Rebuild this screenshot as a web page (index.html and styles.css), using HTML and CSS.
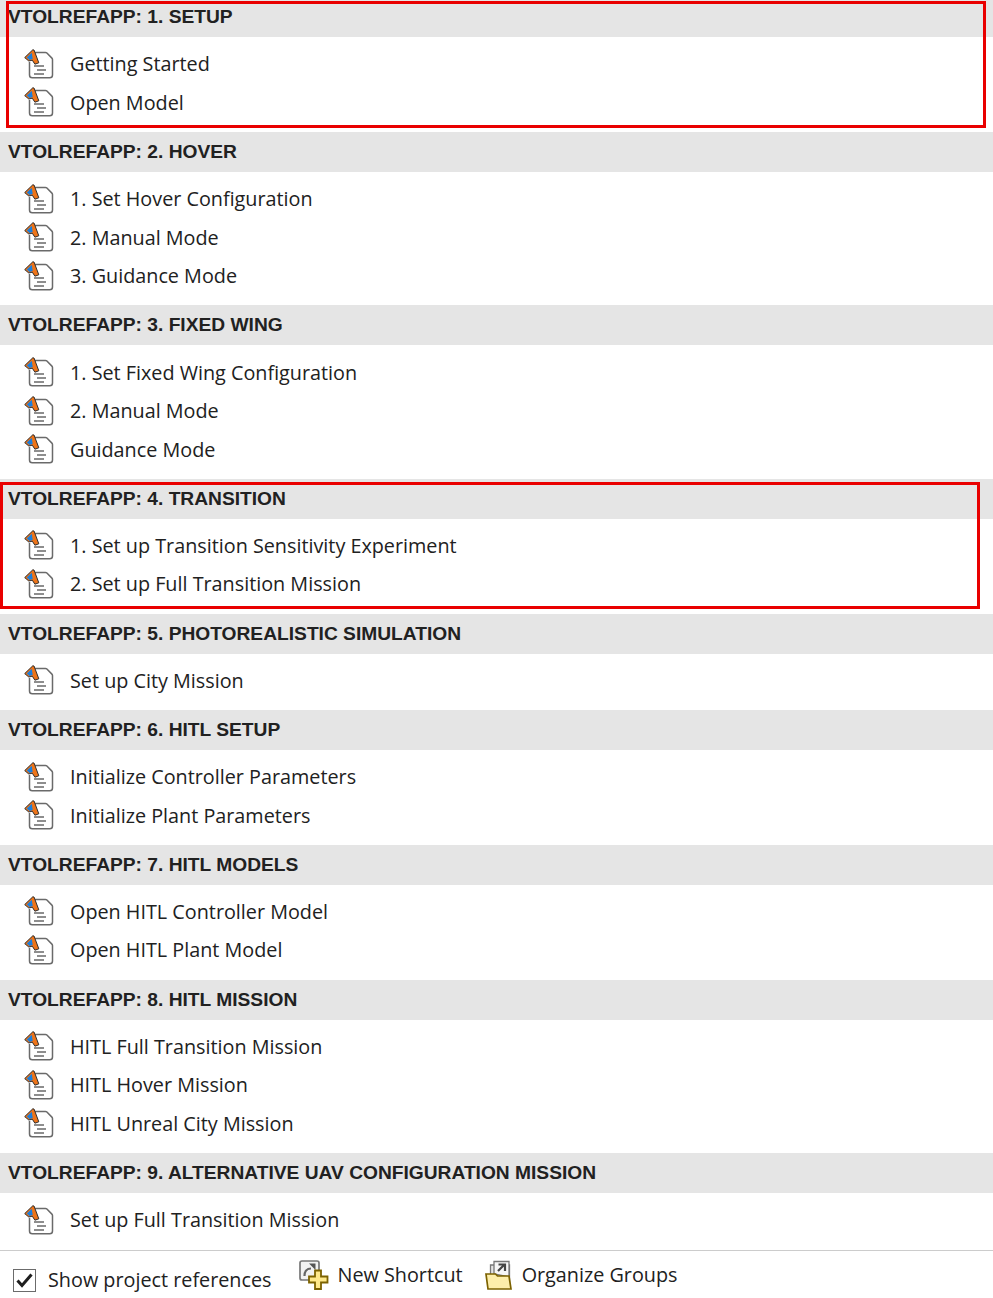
FILE: index.html
```html
<!DOCTYPE html>
<html lang="en">
<head>
<meta charset="UTF-8">
<title>Project Shortcuts</title>
<link rel="stylesheet" href="styles.css">
</head>
<body>

<svg class="defs" width="0" height="0">
  <symbol id="script" viewBox="0 0 30 30">
    <path d="M11 3.500h10.500a2 2 0 0 1 1.400.6l5 5a2 2 0 0 1 .6 1.400V26a2.800 2.800 0 0 1-2.800 2.800H8.300A2.800 2.800 0 0 1 5.500 26V13" fill="#fff" stroke="#6a6a6a" stroke-width="1.500"/>
    <path d="M10 17h10M13 21h9M10 25h10" fill="none" stroke="#6a6a6a" stroke-width="1.300"/>
    <path d="M.7 8.600 8.800.8l1.200.2 4.800 12.800-3.900 1.400-2.600-4-3.500.8z" fill="#ee7418" stroke="#2f2f2f" stroke-width="1"/>
    <path d="M2.800 8.500 7.800 3.800l.9 6.200-3.200 1z" fill="#1c7fdc"/>
  </symbol>
</svg>

<div class="list">
  <section class="group">
    <h2>VTOLREFAPP: 1. SETUP</h2>
    <ul>
      <li><svg class="ico"><use href="#script"/></svg>Getting Started</li>
      <li><svg class="ico"><use href="#script"/></svg>Open Model</li>
    </ul>
  </section>
  <section class="group">
    <h2>VTOLREFAPP: 2. HOVER</h2>
    <ul>
      <li><svg class="ico"><use href="#script"/></svg>1. Set Hover Configuration</li>
      <li><svg class="ico"><use href="#script"/></svg>2. Manual Mode</li>
      <li><svg class="ico"><use href="#script"/></svg>3. Guidance Mode</li>
    </ul>
  </section>
  <section class="group">
    <h2>VTOLREFAPP: 3. FIXED WING</h2>
    <ul>
      <li><svg class="ico"><use href="#script"/></svg>1. Set Fixed Wing Configuration</li>
      <li><svg class="ico"><use href="#script"/></svg>2. Manual Mode</li>
      <li><svg class="ico"><use href="#script"/></svg>Guidance Mode</li>
    </ul>
  </section>
  <section class="group">
    <h2>VTOLREFAPP: 4. TRANSITION</h2>
    <ul>
      <li><svg class="ico"><use href="#script"/></svg>1. Set up Transition Sensitivity Experiment</li>
      <li><svg class="ico"><use href="#script"/></svg>2. Set up Full Transition Mission</li>
    </ul>
  </section>
  <section class="group">
    <h2>VTOLREFAPP: 5. PHOTOREALISTIC SIMULATION</h2>
    <ul>
      <li><svg class="ico"><use href="#script"/></svg>Set up City Mission</li>
    </ul>
  </section>
  <section class="group">
    <h2>VTOLREFAPP: 6. HITL SETUP</h2>
    <ul>
      <li><svg class="ico"><use href="#script"/></svg>Initialize Controller Parameters</li>
      <li><svg class="ico"><use href="#script"/></svg>Initialize Plant Parameters</li>
    </ul>
  </section>
  <section class="group">
    <h2>VTOLREFAPP: 7. HITL MODELS</h2>
    <ul>
      <li><svg class="ico"><use href="#script"/></svg>Open HITL Controller Model</li>
      <li><svg class="ico"><use href="#script"/></svg>Open HITL Plant Model</li>
    </ul>
  </section>
  <section class="group">
    <h2>VTOLREFAPP: 8. HITL MISSION</h2>
    <ul>
      <li><svg class="ico"><use href="#script"/></svg>HITL Full Transition Mission</li>
      <li><svg class="ico"><use href="#script"/></svg>HITL Hover Mission</li>
      <li><svg class="ico"><use href="#script"/></svg>HITL Unreal City Mission</li>
    </ul>
  </section>
  <section class="group">
    <h2>VTOLREFAPP: 9. ALTERNATIVE UAV CONFIGURATION MISSION</h2>
    <ul>
      <li><svg class="ico"><use href="#script"/></svg>Set up Full Transition Mission</li>
    </ul>
  </section>
</div>

<div class="footer">
  <label class="check">
    <svg class="box" viewBox="0 0 23 23">
      <rect x="0.5" y="0.5" width="22" height="22" fill="#fff" stroke="#6b6b6b"/>
      <path d="M4.500 11.500 9 16.500 18.500 5.500" fill="none" stroke="#1e1e1e" stroke-width="3"/>
    </svg>
    <span class="check-text">Show project references</span>
  </label>
  <a class="action">
    <svg class="ico" viewBox="0 0 30 30">
      <rect x="1" y="1" width="19" height="19" rx="2" fill="#f2f2f2" stroke="#777" stroke-width="1.700"/>
      <path d="M5.500 16c0-5 2.500-7.500 6.500-7.500" fill="none" stroke="#666" stroke-width="2.200"/>
      <path d="M10 3.500h6.500V10z" fill="#555"/>
      <path d="M16 10.500h6v6h6.500v6H22V29h-6v-6.500H10v-6h6z" fill="#ffe98a" stroke="#7c6200" stroke-width="1.800"/>
    </svg>
    New Shortcut
  </a>
  <a class="action action-groups">
    <svg class="ico" viewBox="0 0 27 30">
      <path d="M5.500 14V5h19v21H5.500z" fill="#e4e4e4" stroke="#777" stroke-width="1.300"/>
      <path d="M9 14V1.500h15V17z" fill="#f6f6f6" stroke="#777" stroke-width="1.300"/>
      <path d="M13 11l6-6M13.500 4.500H20V11" fill="none" stroke="#444" stroke-width="2.200"/>
      <path d="M1 14h9.500l2 2H24l2 13H3z" fill="#fdeeaa" stroke="#7c6200" stroke-width="1.700"/>
    </svg>
    Organize Groups
  </a>
</div>

<div class="mark mark-a"></div>
<div class="mark mark-b"></div>

</body>
</html>
```
FILE: styles.css
```css
body, html {
  margin: 0;
  height: 100%;
  overflow: hidden;
  background: white;
  font-family: 'Open Sans', sans-serif;
  color: #212121;
}

.defs {
  position: absolute;
}

.list {
  margin-top: -2.86px;
  padding-bottom: 0.6px;
}

.group h2 {
  margin: 0;
  height: 40.1px;
  line-height: 39.6px;
  padding-left: 8px;
  background-color: #e5e5e5;
  font-family: 'Liberation Sans', Arial, sans-serif;
  font-size: 19.2px;
  font-weight: bold;
  color: #212121;
}

.group ul {
  list-style: none;
  margin: 0;
  padding: 7.4px 0 10.36px 24px;
}

.group li {
  display: flex;
  align-items: center;
  gap: 16px;
  height: 38.5px;
  font-size: 19.8px;
}

.ico {
  width: 30px;
  height: 30px;
  flex: none;
}

.footer {
  display: flex;
  align-items: flex-start;
  height: 48px;
  border-top: 1px solid #ccc;
  font-size: 19.8px;
}

.check {
  display: flex;
  align-items: center;
  gap: 12px;
  margin: 15px 0 0 13px;
}

.check-text {
  padding-bottom: 2px;
}

.box {
  width: 23px;
  height: 23px;
}

.action {
  display: flex;
  align-items: center;
  gap: 9px;
  margin: 9px 0 0 27px;
}

.action-groups {
  gap: 10px;
  margin-left: 22px;
}

.action-groups .ico {
  width: 27px;
}

.mark {
  position: absolute;
  box-sizing: border-box;
  width: 980px;
  height: 127px;
  border: 3px solid #e90000;
}

.mark-a {
  left: 6px;
  top: 1px;
}

.mark-b {
  left: 0;
  top: 482px;
}
```
